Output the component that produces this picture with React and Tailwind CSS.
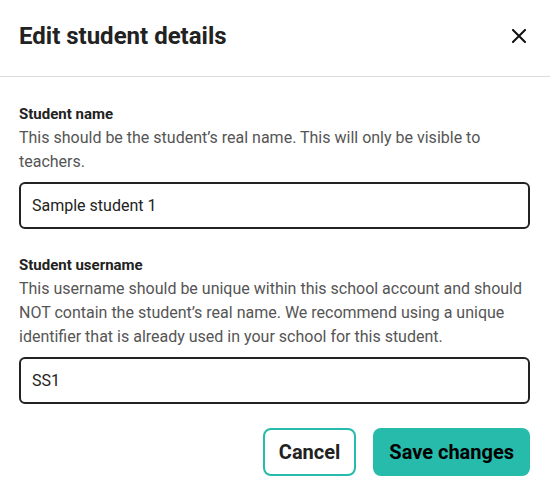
import React, { useState } from 'react';

const Field = ({ label, hint, value, onChange }) => (
  <div>
    <label className="block text-[15px] leading-6 font-bold text-[#222]">{label}</label>
    <p className="text-[16px] leading-6 text-[#555]">{hint}</p>
    <input
      type="text"
      value={value}
      onChange={onChange}
      className="mt-2 w-full h-[47px] rounded-md border-2 border-[#222] px-[11px] text-[16px] text-[#222] outline-none"
    />
  </div>
);

const App = () => {
  const [name, setName] = useState('Sample student 1');
  const [username, setUsername] = useState('SS1');

  return (
    <div className="w-[550px] h-[496px] bg-white font-['Roboto',sans-serif]">
      <div className="flex items-center justify-between h-[77px] pl-[19px] pr-[24px] pb-[5px] border-b border-[#dcdce0]">
        <h2 className="text-[24px] font-bold text-[#222]">Edit student details</h2>
        <button className="text-[#111]" aria-label="Close">
          <svg width="14" height="14" viewBox="0 0 14 14" fill="none" stroke="currentColor" strokeWidth="2" strokeLinecap="square">
            <path d="M1 1L13 13M13 1L1 13" />
          </svg>
        </button>
      </div>

      <div className="pl-[19px] pr-[20px] pt-[25px] space-y-6">
        <Field
          label="Student name"
          hint="This should be the student’s real name. This will only be visible to teachers."
          value={name}
          onChange={(e) => setName(e.target.value)}
        />
        <Field
          label="Student username"
          hint="This username should be unique within this school account and should NOT contain the student’s real name. We recommend using a unique identifier that is already used in your school for this student."
          value={username}
          onChange={(e) => setUsername(e.target.value)}
        />
        <div className="flex justify-end gap-[17px]">
          <button className="h-12 px-[14px] rounded-lg border-2 border-[#26bbab] text-[20px] font-bold text-[#222]">
            Cancel
          </button>
          <button className="h-12 px-4 rounded-lg bg-[#26bbab] text-[20px] font-bold text-black">
            Save changes
          </button>
        </div>
      </div>
    </div>
  );
};

export default App;
